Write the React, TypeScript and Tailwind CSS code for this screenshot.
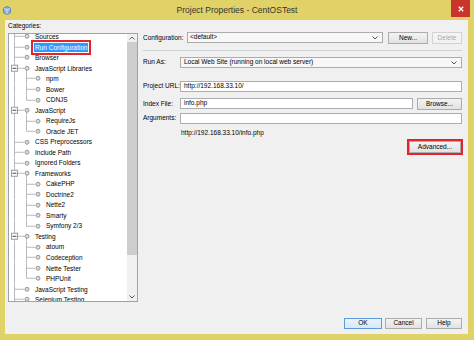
import React from "react";

type Node = {
  label: string;
  level: 0 | 1;
  parent?: boolean;
  last?: boolean;
  selected?: boolean;
};

const nodes: Node[] = [
  { label: "Sources", level: 0 },
  { label: "Run Configuration", level: 0, selected: true },
  { label: "Browser", level: 0 },
  { label: "JavaScript Libraries", level: 0, parent: true },
  { label: "npm", level: 1 },
  { label: "Bower", level: 1 },
  { label: "CDNJS", level: 1, last: true },
  { label: "JavaScript", level: 0, parent: true },
  { label: "RequireJs", level: 1 },
  { label: "Oracle JET", level: 1, last: true },
  { label: "CSS Preprocessors", level: 0 },
  { label: "Include Path", level: 0 },
  { label: "Ignored Folders", level: 0 },
  { label: "Frameworks", level: 0, parent: true },
  { label: "CakePHP", level: 1 },
  { label: "Doctrine2", level: 1 },
  { label: "Nette2", level: 1 },
  { label: "Smarty", level: 1 },
  { label: "Symfony 2/3", level: 1, last: true },
  { label: "Testing", level: 0, parent: true },
  { label: "atoum", level: 1 },
  { label: "Codeception", level: 1 },
  { label: "Nette Tester", level: 1 },
  { label: "PHPUnit", level: 1, last: true },
  { label: "JavaScript Testing", level: 0 },
  { label: "Selenium Testing", level: 0 },
];

const ROW = 10.52;

function Gutter({ node }: { node: Node }) {
  const m = ROW / 2;
  const w = node.level === 0 ? 25 : 36;
  const line = "#b9b9b9";
  return (
    <svg width={w} height={ROW} viewBox={`0 0 ${w} ${ROW}`} className="shrink-0">
      <line x1="5.5" y1="0" x2="5.5" y2={ROW} stroke={line} />
      {node.level === 0 ? (
        <>
          <line x1="5.5" y1={m} x2="15" y2={m} stroke={line} />
          {node.parent && (
            <>
              <line x1="17.5" y1={m + 2} x2="17.5" y2={ROW} stroke={line} />
              <rect x="2.5" y={m - 3} width="6" height="6" fill="#fff" stroke="#9c9c9c" />
              <line x1="3.5" y1={m} x2="7.5" y2={m} stroke="#4a4a4a" />
            </>
          )}
          <circle cx="18" cy={m} r="2" fill="#dadada" stroke="#8f8f8f" strokeWidth="0.9" />
        </>
      ) : (
        <>
          <line x1="17.5" y1="0" x2="17.5" y2={node.last ? m : ROW} stroke={line} />
          <line x1="17.5" y1={m} x2="26" y2={m} stroke={line} />
          <circle cx="29" cy={m} r="2" fill="#dadada" stroke="#8f8f8f" strokeWidth="0.9" />
        </>
      )}
    </svg>
  );
}

function Chevron() {
  return (
    <svg width="6" height="4" viewBox="0 0 6 4" className="shrink-0">
      <path d="M0.5 0.5 L3 3 L5.5 0.5" fill="none" stroke="#555" strokeWidth="1" />
    </svg>
  );
}

type Variant = "normal" | "default" | "disabled";

const variants: Record<Variant, string> = {
  normal: "border-[#acacac] from-[#f3f3f3] to-[#e2e2e2] text-black",
  default: "border-[#5b9bd8] from-[#e9f2fb] to-[#dae7f5] text-black",
  disabled: "border-[#d3d3d3] from-[#f5f5f5] to-[#f2f2f2] text-[#a8a8a8]",
};

function Btn({
  children,
  className = "",
  variant = "normal",
}: {
  children: React.ReactNode;
  className?: string;
  variant?: Variant;
}) {
  return (
    <div
      className={`flex items-center justify-center border bg-linear-to-b text-[6.5px] leading-none ${variants[variant]} ${className}`}
    >
      {children}
    </div>
  );
}

function Label({ children, className = "" }: { children: React.ReactNode; className?: string }) {
  return <div className={`shrink-0 text-[6.5px] leading-none text-black ${className}`}>{children}</div>;
}

function Input({ value, className = "" }: { value?: string; className?: string }) {
  return (
    <div
      className={`flex h-[11px] items-center border border-[#abadb3] bg-white pl-[3px] text-[6.5px] leading-none text-black ${className}`}
    >
      {value}
    </div>
  );
}

export default function App() {
  return (
    <div
      className="flex h-[340px] w-[474px] flex-col overflow-hidden bg-[#e0d266]"
      style={{ fontFamily: '"Liberation Sans", Arial, sans-serif' }}
    >
      {/* title bar */}
      <div className="grid h-[20px] shrink-0 grid-cols-[1fr_auto_1fr] items-center">
        <div className="pl-[3px] pt-[1px]">
          <svg width="8" height="9" viewBox="0 0 8 9">
            <path d="M4 0.5 L7.5 2.2 L7.5 6.6 L4 8.5 L0.5 6.6 L0.5 2.2 Z" fill="#8fb3df" stroke="#4f72a3" strokeWidth="0.8" />
            <path d="M0.8 2.3 L4 4 L7.2 2.3 M4 4 L4 8.2" fill="none" stroke="#e8f1fb" strokeWidth="0.7" />
          </svg>
        </div>
        <div className="text-[8.5px] leading-none text-[#333]">Project Properties - CentOSTest</div>
        <div className="flex justify-end self-start pr-[4px]">
          <div className="flex h-[17px] w-[19px] items-center justify-center bg-[#c9342d]">
            <svg width="6" height="6" viewBox="0 0 6 6">
              <path d="M0.8 0.8 L5.2 5.2 M5.2 0.8 L0.8 5.2" stroke="#fff" strokeWidth="1.3" />
            </svg>
          </div>
        </div>
      </div>

      {/* dialog body */}
      <div className="ml-[5px] mr-[6px] flex h-[314px] shrink-0 flex-col bg-[#f0f0f0] pl-[3px] pr-[6px]">
        <div className="flex gap-[5px]">
          {/* categories */}
          <div className="flex w-[130px] shrink-0 flex-col">
            <Label className="mt-[3px] h-[6px]">Categories:</Label>
            <div className="mt-[4px] flex h-[269px] border border-[#9ea3aa] bg-white">
              <div className="flex-1 overflow-hidden">
                <div className="-mt-[2.6px] flex flex-col">
                  {nodes.map((n) => (
                    <div key={n.label} className="flex h-[10.52px] items-center">
                      <Gutter node={n} />
                      <span
                        className={`whitespace-nowrap px-[1px] text-[6.5px] leading-[9px] ${
                          n.selected
                            ? "bg-[#3399ff] text-white outline-2 outline-offset-1 outline-[#e0262c]"
                            : "text-black"
                        }`}
                      >
                        {n.label}
                      </span>
                    </div>
                  ))}
                </div>
              </div>
              <div className="flex w-[10px] shrink-0 flex-col bg-[#f0f0f0]">
                <div className="flex h-[8px] items-center justify-center">
                  <svg width="6" height="4" viewBox="0 0 6 4">
                    <path d="M0.5 3.5 L3 1 L5.5 3.5" fill="none" stroke="#606060" strokeWidth="1" />
                  </svg>
                </div>
                <div className="h-[213px] bg-[#cdcdcd]" />
                <div className="flex-1" />
                <div className="flex h-[8px] items-center justify-center">
                  <Chevron />
                </div>
              </div>
            </div>
          </div>

          {/* settings form */}
          <div className="flex flex-1 flex-col">
            <div className="mt-[12px] flex items-start">
              <Label className="mt-[3px] w-[44px]">Configuration:</Label>
              <div className="flex h-[11px] flex-1 items-center justify-between border border-[#acacac] bg-[#f7f7f7] pl-[2px] pr-[4px] text-[6.5px] leading-none">
                <span>&lt;default&gt;</span>
                <Chevron />
              </div>
              <Btn className="ml-[5px] h-[12px] w-[40px]">New...</Btn>
              <Btn className="ml-[4px] h-[12px] w-[30px]" variant="disabled">
                Delete
              </Btn>
            </div>

            <div className="mt-[6px] h-[1px] bg-[#cfd2d4]" />

            <div className="mt-[6px] flex items-center">
              <Label className="w-[37px]">Run As:</Label>
              <div className="flex h-[11px] flex-1 items-center justify-between border border-[#acacac] bg-[#f7f7f7] pl-[3px] pr-[4px] text-[6.5px] leading-none">
                <span>Local Web Site (running on local web server)</span>
                <Chevron />
              </div>
            </div>

            <div className="mt-[13px] flex items-center">
              <Label className="w-[37px]">Project URL:</Label>
              <Input className="flex-1" value="http://192.168.33.10/" />
            </div>

            <div className="mt-[6px] flex items-start">
              <Label className="mt-[3px] w-[37px]">Index File:</Label>
              <Input className="flex-1" value="info.php" />
              <Btn className="ml-[4px] h-[12px] w-[45px]">Browse...</Btn>
            </div>

            <div className="mt-[3px] flex items-center">
              <Label className="w-[37px]">Arguments:</Label>
              <Input className="flex-1" />
            </div>

            <div className="mt-[5px] pl-[38px] text-[6.5px] leading-[7px] text-black">http://192.168.33.10/info.php</div>

            <div className="mt-[5px] flex justify-end pr-[1px]">
              <Btn className="h-[12px] w-[52px] outline-2 outline-[#e0262c]">Advanced...</Btn>
            </div>
          </div>
        </div>

        {/* footer buttons */}
        <div className="mt-[16px] flex justify-end">
          <Btn className="h-[11px] w-[38px]" variant="default">
            OK
          </Btn>
          <Btn className="ml-[3px] h-[11px] w-[37px]">Cancel</Btn>
          <Btn className="ml-[4px] h-[11px] w-[36px]">Help</Btn>
        </div>
      </div>
    </div>
  );
}
